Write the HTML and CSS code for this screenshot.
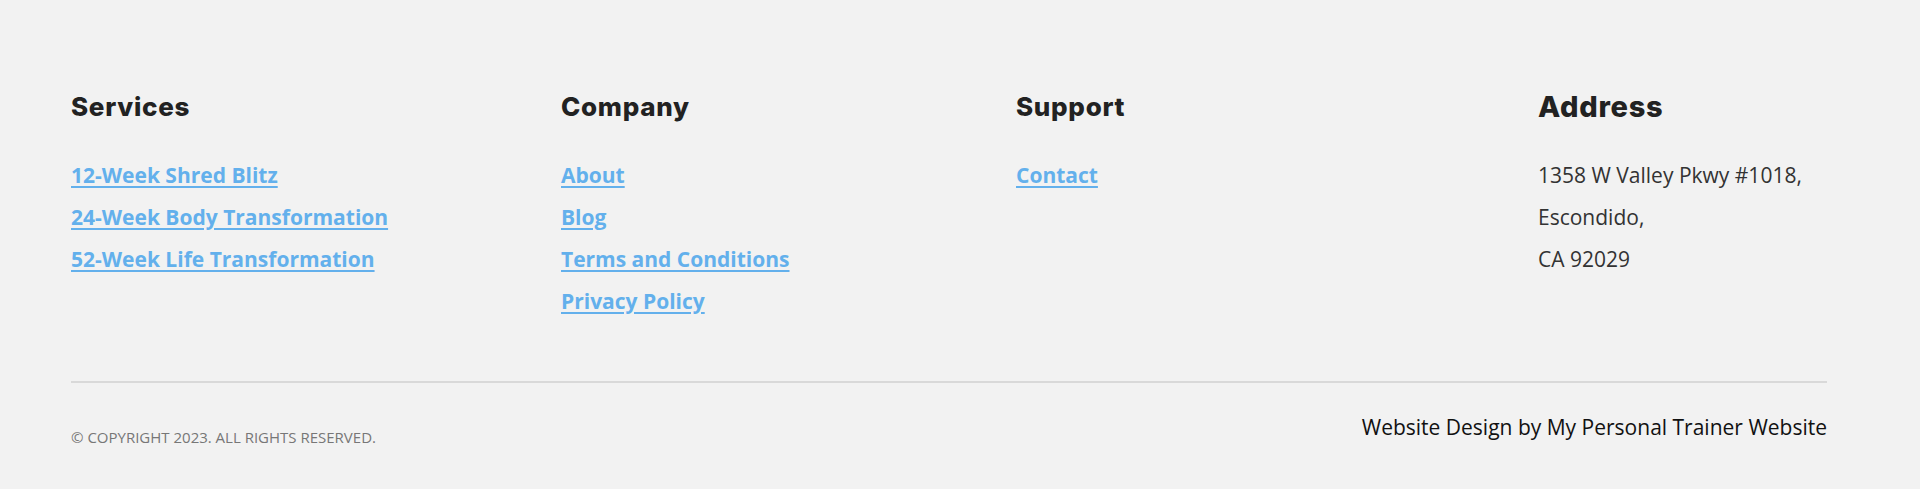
FILE: index.html
```html
<!DOCTYPE html>
<html lang="en">
<head>
<meta charset="utf-8">
<title>Footer</title>
<link rel="stylesheet" href="styles.css">
</head>
<body>
<footer class="footer">
  <div class="footer-cols">
    <div class="col">
      <h3 class="col-title">Services</h3>
      <ul class="links">
        <li><a href="#">12-Week Shred Blitz</a></li>
        <li><a href="#">24-Week Body Transformation</a></li>
        <li><a href="#">52-Week Life Transformation</a></li>
      </ul>
    </div>
    <div class="col">
      <h3 class="col-title">Company</h3>
      <ul class="links">
        <li><a href="#">About</a></li>
        <li><a href="#">Blog</a></li>
        <li><a href="#">Terms and Conditions</a></li>
        <li><a href="#">Privacy Policy</a></li>
      </ul>
    </div>
    <div class="col">
      <h3 class="col-title">Support</h3>
      <ul class="links">
        <li><a href="#">Contact</a></li>
      </ul>
    </div>
    <div class="col">
      <h3 class="col-title col-title-lg">Address</h3>
      <ul class="links address">
        <li>1358 W Valley Pkwy #1018,</li>
        <li>Escondido,</li>
        <li>CA 92029</li>
      </ul>
    </div>
  </div>
  <div class="footer-bottom">
    <p class="copyright">© COPYRIGHT 2023. ALL RIGHTS RESERVED.</p>
    <p class="credit">Website Design by My Personal Trainer Website</p>
  </div>
</footer>
</body>
</html>
```

FILE: styles.css
```css
html, body {
  margin: 0;
  padding: 0;
  background: #f2f2f2;
}

body {
  font-family: "Open Sans", "Liberation Sans", sans-serif;
  color: #333;
  height: 489px;
  overflow: hidden;
}

.footer {
  padding: 91px 93px 0 71px;
}

.footer-cols {
  display: grid;
  grid-template-columns: 490px 455px 522px 1fr;
}

.col-title {
  margin: 0 0 31px;
  font-family: "Inter", "Noto Sans", sans-serif;
  font-weight: 800;
  font-size: 26px;
  line-height: 32px;
  color: #222;
  letter-spacing: 0.7px;
}

.col-title-lg {
  font-size: 29px;
}

.links {
  list-style: none;
  margin: 0;
  padding: 0;
}

.links li {
  font-size: 21px;
  line-height: 42px;
}

.links a {
  color: #63b0ec;
  font-weight: 700;
  text-decoration: underline;
  text-underline-offset: 3px;
}

.address li {
  color: #333;
}

.footer-bottom {
  margin-top: 59px;
  border-top: 2px solid #d9d9d9;
  padding-top: 29px;
  display: flex;
  justify-content: space-between;
  align-items: flex-end;
}

.copyright {
  margin: 0;
  font-size: 15px;
  line-height: 22px;
  color: #777;
}

.credit {
  margin: 0;
  padding-bottom: 6px;
  font-size: 21px;
  line-height: 30px;
  color: #111;
}
```
